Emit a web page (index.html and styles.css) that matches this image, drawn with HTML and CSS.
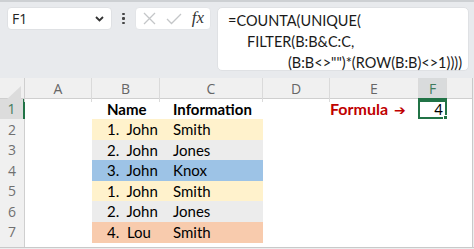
FILE: index.html
```html
<!DOCTYPE html>
<html>
<head>
<meta charset="utf-8">
<link rel="stylesheet" href="styles.css">
</head>
<body>
<div class="app">
  <div class="topbar">
    <div class="namebox">
      <span class="cellref">F1</span>
      <svg class="chev" width="9" height="6" viewBox="0 0 9 6"><polyline points="1,1 4.5,4.5 8,1" fill="none" stroke="#333" stroke-width="1.8"/></svg>
    </div>
    <div class="dots"><i></i><i></i><i></i></div>
    <div class="btnbox">
      <svg width="13" height="13" viewBox="0 0 13 13"><path d="M1 1 L12 12 M12 1 L1 12" stroke="#c4c6c8" stroke-width="1.3" fill="none"/></svg>
      <svg width="16" height="12" viewBox="0 0 16 12"><polyline points="1,6 5.5,10.5 15,1" stroke="#c4c6c8" stroke-width="1.3" fill="none"/></svg>
      <span class="fx">fx</span>
    </div>
    <div class="formula">
      <div class="fl l1">=COUNTA(UNIQUE(</div>
      <div class="fl l2">FILTER(B:B&amp;C:C,</div>
      <div class="fl l3">(B:B&lt;&gt;"")*(ROW(B:B)&lt;&gt;1))))</div>
    </div>
  </div>

  <div class="sheet">
    <div class="grid">
      <div class="row hdr">
        <div class="corner"><span class="tri"></span></div>
        <div class="ch">A</div><div class="ch">B</div><div class="ch">C</div><div class="ch">D</div><div class="ch">E</div><div class="ch sel">F</div><div class="ch last"></div>
      </div>
      <div class="row r20">
        <div class="rh sel">1</div><div class="c"></div>
        <div class="c b ind-b">Name</div><div class="c b ind-c">Information</div>
        <div class="c"></div><div class="c lbl">Formula <span class="arrow">➔</span></div>
        <div class="c active">4<span class="handle"></span></div><div class="c"></div>
      </div>
      <div class="row r21">
        <div class="rh">2</div><div class="c"></div>
        <div class="c ind-b yellow">1.  John</div><div class="c ind-c yellow">Smith</div>
        <div class="c"></div><div class="c"></div><div class="c"></div><div class="c"></div>
      </div>
      <div class="row r20">
        <div class="rh">3</div><div class="c"></div>
        <div class="c ind-b gray">2.  John</div><div class="c ind-c gray">Jones</div>
        <div class="c"></div><div class="c"></div><div class="c"></div><div class="c"></div>
      </div>
      <div class="row r21">
        <div class="rh">4</div><div class="c"></div>
        <div class="c ind-b blue">3.  John</div><div class="c ind-c blue">Knox</div>
        <div class="c"></div><div class="c"></div><div class="c"></div><div class="c"></div>
      </div>
      <div class="row r20">
        <div class="rh">5</div><div class="c"></div>
        <div class="c ind-b yellow">1.  John</div><div class="c ind-c yellow">Smith</div>
        <div class="c"></div><div class="c"></div><div class="c"></div><div class="c"></div>
      </div>
      <div class="row r21">
        <div class="rh">6</div><div class="c"></div>
        <div class="c ind-b gray">2.  John</div><div class="c ind-c gray">Jones</div>
        <div class="c"></div><div class="c"></div><div class="c"></div><div class="c"></div>
      </div>
      <div class="row r20">
        <div class="rh">7</div><div class="c"></div>
        <div class="c ind-b orange">4.  Lou</div><div class="c ind-c orange">Smith</div>
        <div class="c"></div><div class="c"></div><div class="c"></div><div class="c"></div>
      </div>
      <div class="row r20">
        <div class="rh"></div><div class="c"></div><div class="c"></div><div class="c"></div>
        <div class="c"></div><div class="c"></div><div class="c"></div><div class="c"></div>
      </div>
    </div>
    <div class="vscroll"></div>
  </div>
  <div class="hscroll"></div>
</div>
</body>
</html>
```
FILE: styles.css
```css
* { box-sizing: border-box; }
html, body { margin: 0; padding: 0; }
body { width: 474px; height: 249px; overflow: hidden; background: #fff; font-family: "Lato", "Liberation Sans", sans-serif; }
.app { width: 474px; height: 249px; display: flex; flex-direction: column; overflow: hidden; }

.topbar {
  height: 78px; flex: none;
  background: #e8eaed;
  border-top: 2px solid #cdd0d3;
  display: flex; align-items: flex-start;
  padding: 5px 0 0 7px;
}
.namebox {
  width: 105px; height: 23px; background: #fff; border-radius: 4px;
  border: 1px solid #dfe1e4;
  display: flex; align-items: center; justify-content: space-between;
  padding: 0 7px 0 4px;
}
.cellref { font-family: "Open Sans", sans-serif; font-size: 14px; color: #222; }
.dots { width: 23px; height: 23px; display: flex; flex-direction: column; align-items: center; justify-content: center; gap: 2px; }
.dots i { width: 2.5px; height: 2.5px; background: #444; border-radius: 1px; display: block; }
.btnbox {
  width: 76px; height: 23px; background: #fff; border-radius: 4px; border: 1px solid #e3e5e8;
  display: flex; align-items: center; justify-content: space-between; padding: 0 6px 0 7px;
}
.fx { font-family: "Liberation Serif", serif; font-style: italic; font-size: 17px; color: #333; line-height: 1; padding-bottom: 2px; }
.formula {
  margin-left: 6px; width: 252px; height: 64px; background: #fff; border-radius: 5px;
  border: 1px solid #dfe1e4; padding: 2px 0 0 10px;
  font-family: "Lato", sans-serif; font-size: 14.5px; color: #1a1a1a;
}
.fl { height: 21px; line-height: 21px; white-space: nowrap; }
.l2 { padding-left: 19px; }
.l3 { padding-left: 60px; }

.sheet { flex: none; height: 169px; display: flex; overflow: hidden; }
.grid { width: 472px; flex: none; overflow: hidden; }
.row { display: grid; grid-template-columns: 25px 67px 68px 103px 67px 89px 28px 25px; }
.hdr { height: 21px; background: #f0f0f0; border-bottom: 1px solid #cfcfcf; }
.r20 { height: 20px; line-height: 20px; }
.r21 { height: 21px; line-height: 21px; }
.corner { position: relative; border-right: 1px solid #cfcfcf; }
.tri { position: absolute; right: 3px; bottom: 2px; width: 0; height: 0; border-left: 15px solid transparent; border-bottom: 14px solid #dcdcdc; }
.ch {
  font-family: "Open Sans", sans-serif; font-size: 14px; color: #666;
  text-align: center; line-height: 22px;
  border-right: 1px solid #dadada;
}
.ch.sel { background: #d9dbdc; color: #3f7b5c; border-bottom: 2px solid #217346; }
.ch.last { border-right: none; }
.rh {
  background: #f0f0f0; border-right: 1px solid #cfcfcf; border-bottom: 1px solid #dcdcdc;
  font-family: "Open Sans", sans-serif; font-size: 14px; color: #707070;
  text-align: center;
}
.rh.sel { background: #dcdcdc; color: #3f7b5c; border-right: 2px solid #217346; }
.c { display: block; font-size: 15px; color: #000; white-space: pre; }
.b { font-weight: 700; }
.ind-b { padding-left: 15px; }
.ind-c { padding-left: 13px; }
.yellow { background: #fff2cc; }
.gray { background: #ececec; }
.blue { background: #9dc3e6; }
.orange { background: #f8cbad; }
.lbl { text-align: right; padding-right: 14px; color: #c00000; font-weight: 700; font-size: 16px; }
.arrow { font-family: "DejaVu Sans", sans-serif; font-size: 14px; margin-left: 2px; }
.active {
  position: relative; text-align: right; padding-right: 2px;
  border: 2px solid #217346; margin: -1px 0 0 -1px; height: 21px; line-height: 18px;
}
.handle { position: absolute; right: -3px; bottom: -3px; width: 5px; height: 5px; background: #217346; border: 1px solid #fff; }
.vscroll { flex: 1; background: #eceeef; border-left: 1px solid #c9c9c9; }
.hscroll { flex: 1; background: #eceeef; border-top: 1px solid #c9c9c9; }
```
